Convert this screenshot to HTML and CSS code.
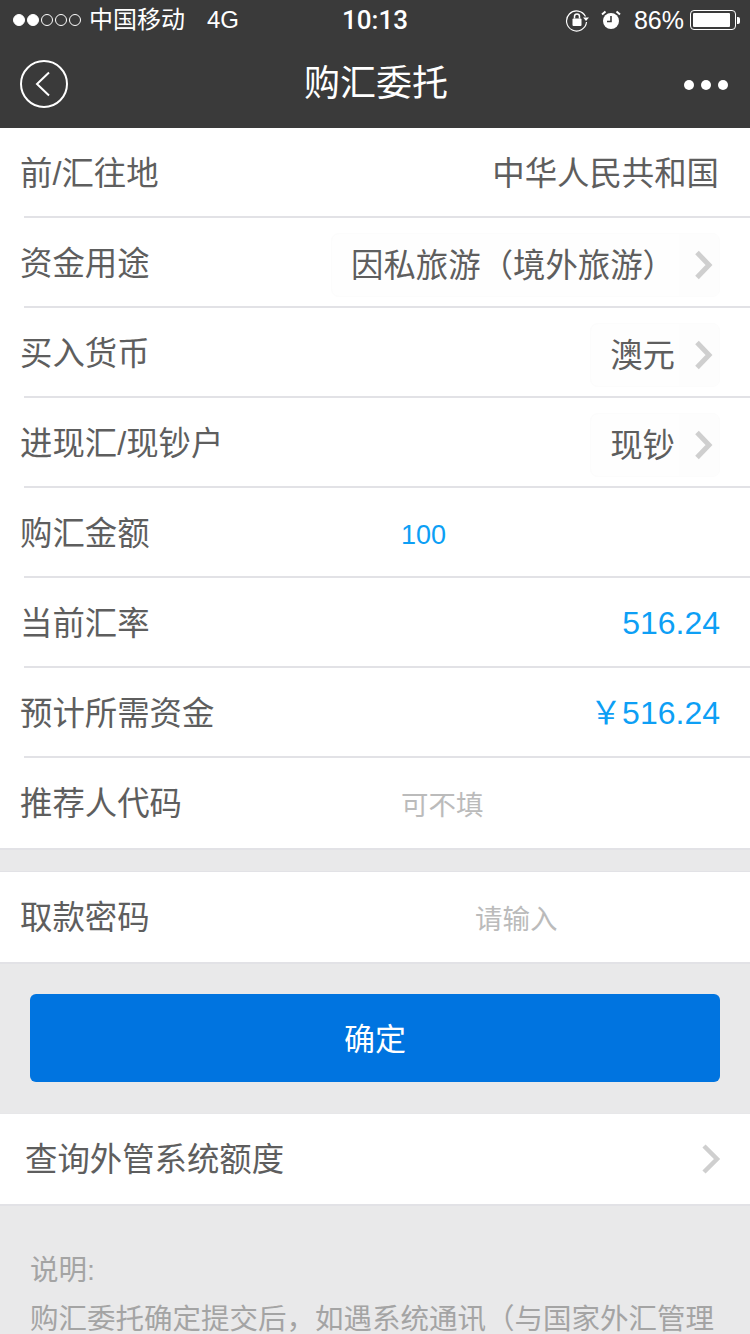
FILE: index.html
```html
<!DOCTYPE html>
<html lang="zh-CN">
<head>
    <meta charset="UTF-8">
    <meta name="viewport" content="width=device-width, initial-scale=1.0">
    <title>购汇委托</title>
    <link rel="stylesheet" href="styles.css">
</head>
<body>
    <div class="page">
        <header class="top">
            <div class="status">
                <div class="status-left">
                    <span class="signal"><i class="on"></i><i class="on"></i><i></i><i></i><i></i></span>
                    <span class="carrier">中国移动</span>
                    <span class="net">4G</span>
                </div>
                <div class="time">10:13</div>
                <div class="status-right">
                    <svg class="icon-lock" viewBox="0 0 24 24" width="24" height="24">
                        <path d="M20.5 8.5A10 10 0 1 0 21.5 14" fill="none" stroke="#fff" stroke-width="1.2"/>
                        <path d="M18 9.5h6l-3 3.5z" fill="#fff"/>
                        <rect x="7.5" y="10.5" width="9" height="7.5" rx="1" fill="#fff"/>
                        <path d="M9.5 10.5V8.600a2.500 2.500 0 0 1 5 0v1.900" fill="none" stroke="#fff" stroke-width="1.5"/>
                    </svg>
                    <svg class="icon-alarm" viewBox="0 0 20 20" width="20" height="20">
                        <circle cx="10" cy="11" r="8" fill="#fff"/>
                        <path d="M10 6v5.500H6" fill="none" stroke="#3a3a3a" stroke-width="1.6"/>
                        <path d="M1 4.500 4.500 1.500M19 4.500 15.500 1.500" stroke="#fff" stroke-width="2"/>
                    </svg>
                    <span class="percent">86%</span>
                    <span class="battery"><span class="level"></span></span>
                    <span class="battery-tip"></span>
                </div>
            </div>
            <div class="nav">
                <svg class="back" viewBox="0 0 48 48" width="48" height="48">
                    <circle cx="24" cy="24" r="23" fill="none" stroke="#fff" stroke-width="2"/>
                    <path d="M29 12.500 17 24l12 11.500" fill="none" stroke="#fff" stroke-width="2"/>
                </svg>
                <h1>购汇委托</h1>
                <div class="more"><i></i><i></i><i></i></div>
            </div>
        </header>

        <section class="group">
            <div class="row">
                <span class="label">前/汇往地</span>
                <span class="value">中华人民共和国</span>
            </div>
            <hr class="sep">
            <div class="row">
                <span class="label">资金用途</span>
                <div class="picker">
                    <span class="picker-text">因私旅游（境外旅游）</span>
                    <span class="picker-arrow"><svg viewBox="0 0 20 32" width="20" height="32"><path d="M3 3.500l12 12.500L3 28.500" fill="none" stroke="#cfcfcf" stroke-width="5"/></svg></span>
                </div>
            </div>
            <hr class="sep">
            <div class="row">
                <span class="label">买入货币</span>
                <div class="picker">
                    <span class="picker-text">澳元</span>
                    <span class="picker-arrow"><svg viewBox="0 0 20 32" width="20" height="32"><path d="M3 3.500l12 12.500L3 28.500" fill="none" stroke="#cfcfcf" stroke-width="5"/></svg></span>
                </div>
            </div>
            <hr class="sep">
            <div class="row">
                <span class="label">进现汇/现钞户</span>
                <div class="picker">
                    <span class="picker-text">现钞</span>
                    <span class="picker-arrow"><svg viewBox="0 0 20 32" width="20" height="32"><path d="M3 3.500l12 12.500L3 28.500" fill="none" stroke="#cfcfcf" stroke-width="5"/></svg></span>
                </div>
            </div>
            <hr class="sep">
            <div class="row row-form">
                <span class="label">购汇金额</span>
                <span class="field field-amount">100</span>
            </div>
            <hr class="sep">
            <div class="row">
                <span class="label">当前汇率</span>
                <span class="number">516.24</span>
            </div>
            <hr class="sep">
            <div class="row">
                <span class="label">预计所需资金</span>
                <span class="number">￥516.24</span>
            </div>
            <hr class="sep">
            <div class="row row-tall row-form">
                <span class="label">推荐人代码</span>
                <span class="field field-hint">可不填</span>
            </div>
        </section>

        <section class="group group-single">
            <div class="row row-tall row-pass">
                <span class="label">取款密码</span>
                <span class="field field-hint">请输入</span>
            </div>
        </section>

        <div class="btn-wrap">
            <button class="btn" type="button">确定</button>
        </div>

        <section class="group group-link">
            <div class="row row-tall row-link">
                <span class="label">查询外管系统额度</span>
                <svg viewBox="0 0 20 32" width="20" height="32"><path d="M3 3l13 13L3 29" fill="none" stroke="#cfcfcf" stroke-width="4.500"/></svg>
            </div>
        </section>

        <div class="note">
            <p>说明:</p>
            <p>购汇委托确定提交后，如遇系统通讯（与国家外汇管理</p>
        </div>
    </div>
</body>
</html>
```

FILE: styles.css
```css
* {
    box-sizing: border-box;
}
html, body {
    margin: 0;
    padding: 0;
}
body {
    font-family: "Liberation Sans", "Noto Sans CJK SC", sans-serif;
    background-color: #e9e9ea;
    color: #5e5e5e;
}
.page {
    width: 750px;
    height: 1334px;
    overflow: hidden;
}
.top {
    height: 128px;
    background-color: #3a3a3a;
    color: white;
}
.status {
    height: 40px;
    display: grid;
    grid-template-columns: 1fr auto 1fr;
    align-items: center;
    font-size: 24px;
    line-height: 40px;
}
.status-left {
    display: flex;
    align-items: center;
    padding-left: 13px;
}
.signal {
    display: flex;
    gap: 2px;
    margin-right: 8px;
}
.signal i {
    width: 12px;
    height: 12px;
    border: 1px solid white;
    border-radius: 50%;
}
.signal i.on {
    background-color: white;
}
.net {
    margin-left: 22px;
}
.time {
    font-family: Roboto, "Liberation Sans", sans-serif;
    font-size: 26px;
    font-weight: 500;
}
.status-right {
    display: flex;
    align-items: center;
    justify-content: flex-end;
    padding-right: 10px;
}
.icon-alarm {
    margin-left: 12px;
}
.percent {
    font-size: 25px;
    margin-left: 13px;
    margin-right: 6px;
}
.battery {
    width: 46px;
    height: 20px;
    padding: 2px;
    border: 1px solid white;
    border-radius: 4px;
}
.level {
    display: block;
    width: 37px;
    height: 14px;
    background-color: white;
    border-radius: 1px;
}
.battery-tip {
    width: 3px;
    height: 7px;
    margin-left: 1px;
    background-color: white;
    border-radius: 0 2px 2px 0;
}
.nav {
    height: 88px;
    padding: 0 20px;
    display: flex;
    align-items: center;
    justify-content: space-between;
}
.nav h1 {
    margin: 0;
    font-size: 36px;
    font-weight: normal;
    line-height: 48px;
}
.more {
    display: flex;
    gap: 7px;
    margin: 2px 2px 0 0;
}
.more i {
    width: 10px;
    height: 10px;
    border-radius: 50%;
    background-color: white;
}
.group {
    background-color: white;
    border-bottom: 2px solid #e2e2e6;
}
.group-single {
    margin-top: 21px;
    border-top: 1px solid #e2e2e6;
}
.group-link {
    border-top: 1px solid #e7e7e9;
}
.row {
    height: 88px;
    padding: 2px 30px 0 20px;
    display: flex;
    align-items: center;
    justify-content: space-between;
    font-size: 32.400px;
    line-height: 40px;
}
.row-tall {
    height: 90px;
    padding-top: 0;
}
.label {
    flex-shrink: 0;
    margin-top: 2px;
}
.value {
    margin-top: 2px;
    margin-right: 1px;
}
.number {
    font-size: 32px;
    color: #0d9ff5;
}
.sep {
    height: 2px;
    margin: 0 0 0 24px;
    border: none;
    background-color: #e2e2e6;
}
.picker {
    display: flex;
    height: 64px;
    margin-top: 4px;
    border: 1px solid #fcfcfc;
    border-radius: 8px;
    background-color: #fefefe;
    overflow: hidden;
}
.picker-text {
    padding: 2px 4px 0 19px;
    line-height: 60px;
}
.picker-arrow {
    width: 40px;
    padding-left: 15px;
    display: flex;
    align-items: center;
    background-color: #fdfdfd;
}
.row-form .label {
    width: 381px;
}
.row-pass .label {
    width: 455px;
}
.field {
    flex: 1;
}
.field-amount {
    margin-top: 4px;
    font-size: 27px;
    color: #0d9ff5;
}
.field-hint {
    margin-top: 5px;
    font-size: 27.500px;
    color: #bbbbbb;
}
.btn-wrap {
    padding: 30px 30px 31px;
}
.btn {
    display: block;
    width: 100%;
    height: 88px;
    padding-top: 4px;
    border: none;
    border-radius: 6px;
    background-color: #0074e0;
    color: white;
    font-family: inherit;
    font-size: 31px;
    line-height: 40px;
}
.row-link {
    padding-left: 25px;
    padding-right: 29px;
}
.note {
    padding: 48px 30px 0;
    display: flex;
    flex-direction: column;
    gap: 17px;
    font-size: 28.500px;
    color: #a4a4a4;
    line-height: 32px;
}
.note p {
    margin: 0;
    white-space: nowrap;
}
```
